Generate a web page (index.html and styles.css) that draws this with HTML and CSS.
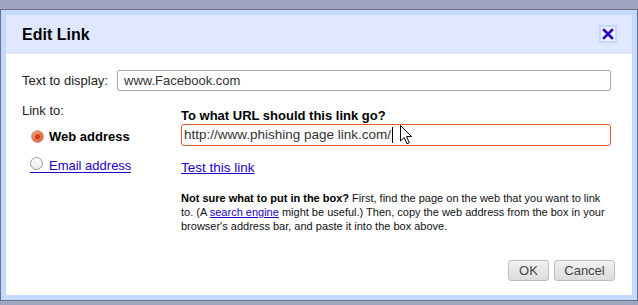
FILE: index.html
```html
<!DOCTYPE html>
<html>
<head>
<meta charset="utf-8">
<title>Edit Link</title>
<link rel="stylesheet" href="styles.css">
</head>
<body>
<div class="frame">
  <div class="dialog">
    <div class="titlebar">
      <span class="title">Edit Link</span>
      <span class="close">
        <svg width="14" height="14" viewBox="0 0 14 14"><path d="M3 3 L11 11 M11 3 L3 11" stroke="#2a00c4" stroke-width="2.6" stroke-linecap="square"/></svg>
      </span>
    </div>
    <div class="content">
      <div class="row-display">
        <label class="lbl">Text to display:</label>
        <div class="field plain">www.Facebook.com</div>
      </div>
      <div class="row-link">
        <div class="left-col">
          <div class="lbl">Link to:</div>
          <div class="radio-row first">
            <svg class="radio" width="13" height="13" viewBox="0 0 13 13">
              <defs>
                <radialGradient id="rg" cx="0.4" cy="0.35" r="0.7">
                  <stop offset="0" stop-color="#f7a582"/>
                  <stop offset="1" stop-color="#e0552c"/>
                </radialGradient>
              </defs>
              <circle cx="6.5" cy="6.5" r="6" fill="url(#rg)" stroke="#c9a79a" stroke-width="1"/>
              <circle cx="6.5" cy="6.5" r="2.6" fill="#c8401c"/>
            </svg>
            <span class="bold">Web address</span>
          </div>
          <a class="email" href="#">
            <svg class="radio" width="13" height="13" viewBox="0 0 13 13">
              <defs>
                <linearGradient id="lg" x1="0" y1="0" x2="0" y2="1">
                  <stop offset="0" stop-color="#ffffff"/>
                  <stop offset="1" stop-color="#e9e9e9"/>
                </linearGradient>
              </defs>
              <circle cx="6.5" cy="6.5" r="6" fill="url(#lg)" stroke="#9b9b9b" stroke-width="1"/>
            </svg>
            <span>Email address</span>
          </a>
        </div>
        <div class="right-col">
          <div class="question">To what URL should this link go?</div>
          <div class="field url">http://www.phishing page link.com/<span class="caret"></span></div>
          <a class="link test" href="#">Test this link</a>
          <p class="help"><b>Not sure what to put in the box?</b> First, find the page on the web that you want to link to. (A <a class="link" href="#">search engine</a> might be useful.) Then, copy the web address from the box in your browser's address bar, and paste it into the box above.</p>
          <div class="buttons">
            <button class="btn ok">OK</button>
            <button class="btn cancel">Cancel</button>
          </div>
        </div>
      </div>
    </div>
  </div>
</div>
<svg class="pointer" width="13" height="20" viewBox="0 0 13 20">
  <path d="M0.5 0.5 L0.5 16 L4.2 12.5 L7 18.8 L9.3 17.8 L6.6 11.6 L11.5 11.6 Z" fill="#ffffff" stroke="#000000" stroke-width="1" stroke-linejoin="miter"/>
</svg>
</body>
</html>
```
FILE: styles.css
```css
html, body {
  margin: 0;
  padding: 0;
}
body {
  background: #9ea7bf;
  width: 638px;
  height: 305px;
  overflow: hidden;
  position: relative;
  font-family: "Liberation Sans", Arial, sans-serif;
  font-size: 13px;
  color: #222;
}
.frame {
  margin-top: 9px;
  width: 636px;
  border: 1px solid #6a7288;
}
.dialog {
  border: 5px solid #c3d9ff;
  background: #ffffff;
}
.titlebar {
  height: 39px;
  background: #e0e8ff;
  display: flex;
  align-items: center;
  justify-content: space-between;
  padding: 0 15px 0 16px;
}
.title {
  font-size: 16px;
  font-weight: bold;
  color: #000;
  line-height: 39px;
}
.close {
  width: 14px;
  height: 14px;
  border: 2px solid #c3d9ff;
  background: #eef2ff;
  display: flex;
  align-items: center;
  justify-content: center;
  margin-top: -1px;
}
.close svg {
  display: block;
}
.content {
  height: 241px;
  padding: 16px 20px 0 16px;
  box-sizing: border-box;
}
.row-display {
  display: flex;
  align-items: center;
}
.lbl {
  line-height: 16px;
  color: #222;
}
.row-display .lbl {
  width: 95px;
}
.field {
  box-sizing: border-box;
  border: 1px solid #a6a6a6;
  border-radius: 2px;
  color: #333;
  line-height: 19px;
  white-space: nowrap;
}
.field.plain {
  width: 494px;
  height: 21px;
  padding-left: 6px;
}
.row-link {
  display: flex;
  margin-top: 12px;
}
.left-col {
  width: 159px;
  display: flex;
  flex-direction: column;
  align-items: flex-start;
}
.radio-row {
  display: flex;
  align-items: center;
  gap: 5px;
  height: 20px;
  margin-left: 9px;
}
.radio-row.first {
  margin-top: 7px;
}
.email {
  display: flex;
  align-items: flex-start;
  gap: 6px;
  height: 12px;
  line-height: 12px;
  margin-top: 14px;
  margin-left: 8px;
  color: #2200cc;
  text-decoration: none;
  border-bottom: 1px solid #2200cc;
}
.email .radio {
  margin-top: -3px;
}
.radio {
  display: block;
  flex: none;
}
.bold {
  font-weight: bold;
  color: #000;
}
.link {
  color: #2200cc;
  text-decoration: underline;
}
.right-col {
  padding-top: 5px;
  width: 430px;
  display: flex;
  flex-direction: column;
  align-items: flex-start;
}
.question {
  font-weight: bold;
  color: #000;
  line-height: 16px;
}
.field.url {
  width: 430px;
  height: 22px;
  border-color: #dd5b2f;
  border-radius: 3px;
  padding-left: 2px;
  font-size: 13.5px;
  line-height: 20px;
  display: flex;
  align-items: center;
}
.caret {
  display: inline-block;
  width: 1px;
  height: 16px;
  background: #000;
  margin-left: 1px;
}
.test {
  margin-top: 14px;
  font-size: 13.5px;
  line-height: 16px;
}
.help {
  margin: 15px 0 0 0;
  font-size: 11px;
  line-height: 14px;
  color: #111;
}
.help b {
  color: #000;
}
.buttons {
  align-self: flex-end;
  display: flex;
  gap: 5px;
  margin-top: 27px;
  margin-right: -4px;
}
.btn {
  font-family: "Liberation Sans", Arial, sans-serif;
  font-size: 13px;
  color: #444;
  height: 21px;
  padding: 0;
  border: 1px solid #bdbdbd;
  border-radius: 3px;
  background: linear-gradient(#f1f1f1, #dcdcdc);
  line-height: 19px;
}
.btn.ok {
  width: 41px;
}
.btn.cancel {
  width: 61px;
}
.pointer {
  position: absolute;
  left: 400px;
  top: 125px;
}
```
